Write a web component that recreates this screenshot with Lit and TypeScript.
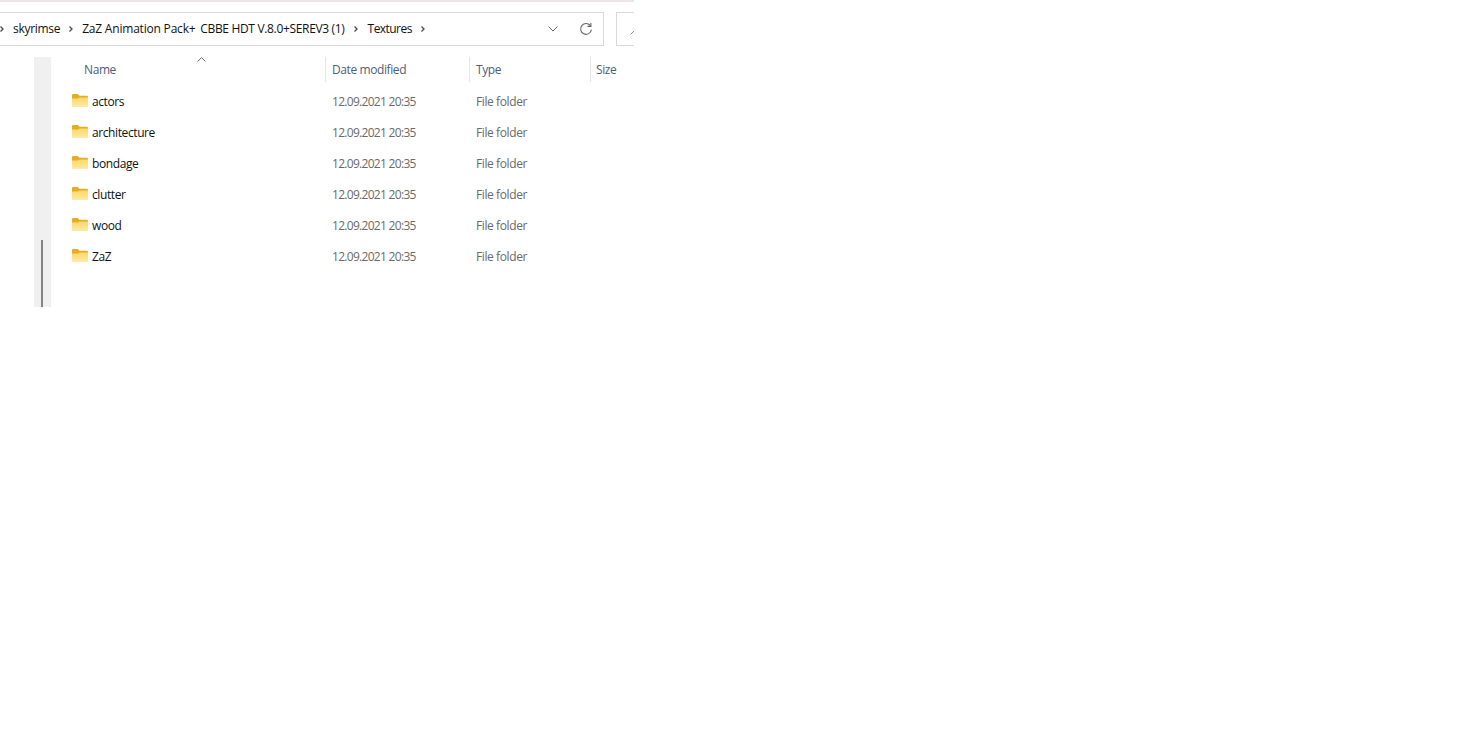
import { LitElement, css, html, svg } from 'lit';
import { customElement } from 'lit/decorators.js';

const folders = ['actors', 'architecture', 'bondage', 'clutter', 'wood', 'ZaZ'];

const crumbChevron = html`<svg class="crumb-sep" width="6" height="8" viewBox="0 0 6 8">
  <path d="M1.5 1.5 L4 4 L1.5 6.5" fill="none" stroke="#4a4a4a" stroke-width="1.3" />
</svg>`;

const folderIcon = svg`<svg class="folder" width="16" height="13" viewBox="0 0 16 13">
  <defs>
    <linearGradient id="fg" x1="0" y1="0" x2="0" y2="1">
      <stop offset="0" stop-color="#fbd868" />
      <stop offset="1" stop-color="#ffe9a6" />
    </linearGradient>
  </defs>
  <path d="M0 1.2 Q0 0 1.2 0 H5.6 L7.6 1.8 H14.8 Q16 1.8 16 3 V5 H0 Z" fill="#e8ac22" />
  <path d="M0 4.4 L6 4.4 L7.6 3.4 H16 V11.8 Q16 13 14.8 13 H1.2 Q0 13 0 11.8 Z" fill="url(#fg)" />
</svg>`;

@customElement('app-root')
export class AppRoot extends LitElement {
  render() {
    return html`
      <div class="window">
        <div class="top-line"></div>
        <div class="toolbar">
          <div class="address">
            <svg class="crumb-first" width="6" height="8" viewBox="0 0 6 8">
              <path d="M0.5 1.5 L3 4 L0.5 6.5" fill="none" stroke="#4a4a4a" stroke-width="1.3" />
            </svg>
            <span class="crumb">skyrimse</span>
            ${crumbChevron}
            <span class="crumb long"><span class="pack">ZaZ Animation Pack+</span> <span class="rest">CBBE HDT V.8.0+SEREV3 (1)</span></span>
            ${crumbChevron}
            <span class="crumb tight">Textures</span>
            ${crumbChevron}
            <span class="spacer"></span>
            <svg class="drop" width="10" height="6" viewBox="0 0 10 6">
              <path d="M0.5 0.5 L5 5 L9.5 0.5" fill="none" stroke="#666" stroke-width="1" />
            </svg>
            <svg class="refresh" width="14" height="14" viewBox="0 0 14 14">
              <path d="M11.6 4 A5.4 5.4 0 1 0 12.4 7.6" fill="none" stroke="#666" stroke-width="1.1" />
              <path d="M11.9 1 V4.4 H8.5" fill="none" stroke="#666" stroke-width="1.1" />
            </svg>
          </div>
          <div class="search">
            <svg width="5" height="5" viewBox="0 0 5 5">
              <path d="M0.5 4.5 L4 1" fill="none" stroke="#888" stroke-width="1" />
            </svg>
          </div>
        </div>
        <div class="body">
          <div class="track"><div class="thumb"></div></div>
          <div class="list">
            <div class="head">
              <div class="hcell name">
                Name
                <svg class="sort" width="9" height="5" viewBox="0 0 9 5">
                  <path d="M0.5 4.5 L4.5 0.7 L8.5 4.5" fill="none" stroke="#666" stroke-width="1" />
                </svg>
              </div>
              <div class="hcell date">Date modified</div>
              <div class="hcell type">Type</div>
              <div class="hcell size">Size</div>
            </div>
            ${folders.map(
              (name) => html`
                <div class="row">
                  <div class="cell-name">${folderIcon}<span>${name}</span></div>
                  <div class="cell-date">12.09.2021 20:35</div>
                  <div class="cell-type">File folder</div>
                </div>
              `,
            )}
          </div>
        </div>
      </div>
    `;
  }

  static styles = css`
    :host {
      display: block;
      min-height: 732px;
      background: #fff;
      font-family: 'Open Sans', 'Noto Sans', sans-serif;
      font-size: 12px;
    }

    .window {
      width: 634px;
      height: 307px;
      overflow: hidden;
    }

    .top-line {
      height: 2px;
      background: #f0e4e6;
    }

    .toolbar {
      display: flex;
      gap: 12px;
      height: 34px;
      margin-top: 10px;
    }

    .address {
      width: 604px;
      box-sizing: border-box;
      flex: none;
      display: flex;
      align-items: center;
      padding-bottom: 1px;
      border: 1px solid #d9d9d9;
      border-left: none;
      color: #111;
    }

    .crumb-first {
      margin-right: 7px;
    }

    .crumb {
      letter-spacing: -0.3px;
      white-space: nowrap;
    }

    .pack {
      letter-spacing: -0.2px;
      margin-right: 2px;
    }

    .rest {
      letter-spacing: -0.33px;
    }

    .crumb.tight {
      letter-spacing: -0.55px;
      margin-left: 1px;
    }

    .crumb-sep {
      margin: 0 8px;
    }

    .spacer {
      flex: 1;
    }

    .drop {
      margin-right: 21px;
    }

    .refresh {
      margin-right: 10px;
    }

    .search {
      flex: 1;
      border: 1px solid #d9d9d9;
      border-right: none;
      display: flex;
      align-items: center;
      padding-left: 13px;
      padding-top: 6px;
    }

    .body {
      display: flex;
      margin-top: 11px;
      height: 250px;
      padding-left: 34px;
    }

    .track {
      width: 16px;
      height: 250px;
      background: #f0f0f0;
      display: flex;
      justify-content: center;
      align-items: flex-end;
      flex: none;
    }

    .thumb {
      width: 2px;
      height: 67px;
      background: #858585;
    }

    .list {
      flex: 1;
      border-left: 1px solid #efefef;
    }

    .head {
      display: flex;
      height: 29px;
      color: #4c607a;
      letter-spacing: -0.4px;
    }

    .hcell {
      display: flex;
      align-items: center;
      box-sizing: border-box;
      height: 25px;
      border-right: 1px solid #e5e5e5;
      position: relative;
    }

    .name {
      width: 275px;
      padding-left: 33px;
    }

    .date {
      width: 144px;
      padding-left: 6px;
    }

    .type {
      width: 121px;
      padding-left: 6px;
    }

    .size {
      padding-left: 5px;
      border-right: none;
    }

    .sort {
      position: absolute;
      left: 146px;
      top: 0;
    }

    .row {
      display: flex;
      align-items: center;
      height: 31px;
      color: #6a6a6a;
    }

    .cell-name {
      width: 275px;
      box-sizing: border-box;
      padding-left: 21px;
      display: flex;
      align-items: center;
      gap: 4px;
      color: #111;
      letter-spacing: -0.4px;
    }

    .folder {
      flex: none;
      margin-top: -2px;
    }

    .cell-date {
      width: 144px;
      padding-left: 6px;
      box-sizing: border-box;
      letter-spacing: -0.7px;
    }

    .cell-type {
      padding-left: 6px;
      letter-spacing: -0.4px;
    }
  `;
}
